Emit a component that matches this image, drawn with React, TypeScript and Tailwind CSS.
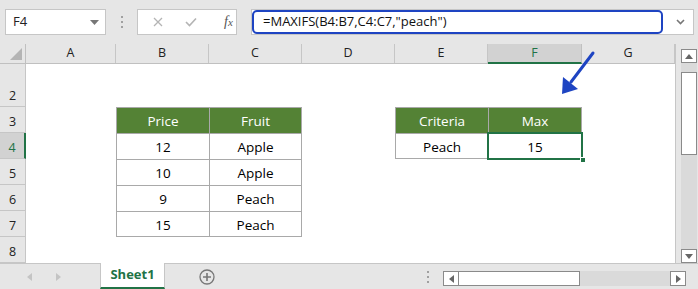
import React from "react";

const COLS = ["A", "B", "C", "D", "E", "F", "G"];
const COLW = ["w-[90px]", "w-[93px]", "w-[93px]", "w-[93px]", "w-[93px]", "w-[94px]", "w-[93px]"];

type Cell = { text?: string; kind?: "head" | "body"; l?: boolean; r?: boolean; t?: boolean; b?: boolean; sel?: boolean };

const rows: { n: number; h: string; cells: Record<number, Cell> }[] = [
  { n: 2, h: "h-[43px]", cells: {} },
  {
    n: 3,
    h: "h-[26px]",
    cells: {
      1: { text: "Price", kind: "head", l: true, t: true },
      2: { text: "Fruit", kind: "head", l: true, t: true, r: true },
      4: { text: "Criteria", kind: "head", l: true, t: true },
      5: { text: "Max", kind: "head", l: true, t: true, r: true },
    },
  },
  {
    n: 4,
    h: "h-[26px]",
    cells: {
      1: { text: "12", kind: "body", l: true, t: true },
      2: { text: "Apple", kind: "body", l: true, t: true, r: true },
      4: { text: "Peach", kind: "body", l: true, t: true, b: true },
      5: { text: "15", kind: "body", l: true, t: true, r: true, b: true, sel: true },
    },
  },
  {
    n: 5,
    h: "h-[26px]",
    cells: {
      1: { text: "10", kind: "body", l: true, t: true },
      2: { text: "Apple", kind: "body", l: true, t: true, r: true },
    },
  },
  {
    n: 6,
    h: "h-[26px]",
    cells: {
      1: { text: "9", kind: "body", l: true, t: true },
      2: { text: "Peach", kind: "body", l: true, t: true, r: true },
    },
  },
  {
    n: 7,
    h: "h-[26px]",
    cells: {
      1: { text: "15", kind: "body", l: true, t: true, b: true },
      2: { text: "Peach", kind: "body", l: true, t: true, r: true, b: true },
    },
  },
  { n: 8, h: "h-[26px]", cells: {} },
];

function CellView({ c, w }: { c?: Cell; w: string }) {
  if (!c) return <div className={`${w} h-full bg-white`} />;
  const cls = [
    w,
    "h-full relative flex items-center justify-center pt-[2px] text-[13.5px]",
    c.kind === "head" ? "bg-[#548235] text-white" : "bg-white text-black",
    c.l ? "border-l border-l-[#a9a9a9]" : "",
    c.r ? "border-r border-r-[#a9a9a9]" : "",
    c.t ? "border-t border-t-[#a9a9a9]" : "",
    c.b ? "border-b border-b-[#a9a9a9]" : "",
  ].join(" ");
  return (
    <div className={cls}>
      <span>{c.text}</span>
      {c.sel && (
        <>
          <div className="absolute -left-[2px] -top-[2px] -right-[2px] -bottom-[2px] border-2 border-[#217346] pointer-events-none" />
          <div className="absolute -right-[5px] -bottom-[5px] w-[6px] h-[6px] bg-[#217346] border border-white" />
        </>
      )}
    </div>
  );
}

export default function App() {
  return (
    <div className="relative w-[698px] h-[289px] overflow-hidden bg-[#e6e6e6] font-['Open_Sans',sans-serif] select-none">
      {/* Formula band */}
      <div className="h-[44px] flex items-start pt-[9px]">
        <div className="ml-[5px] w-[101px] h-[26px] bg-white border border-[#c6c6c6] flex items-center justify-between pl-[7px] pr-[6px]">
          <span className="text-[13px] text-[#222]">F4</span>
          <svg width="9" height="5" viewBox="0 0 9 5">
            <path d="M0 0 L9 0 L4.5 5 Z" fill="#777" />
          </svg>
        </div>
        <div className="w-[31px] h-[26px] flex flex-col items-center justify-center gap-[3px]">
          <div className="w-[2px] h-[2px] bg-[#a0a0a0]" />
          <div className="w-[2px] h-[2px] bg-[#a0a0a0]" />
          <div className="w-[2px] h-[2px] bg-[#a0a0a0]" />
        </div>
        <div className="w-[100px] h-[26px] bg-white border border-[#c6c6c6] flex items-center">
          <svg className="ml-[15px]" width="10" height="10" viewBox="0 0 10 10">
            <path d="M1 1 L9 9 M9 1 L1 9" stroke="#b4b4b4" strokeWidth="1.3" />
          </svg>
          <svg className="ml-[22px]" width="12" height="10" viewBox="0 0 12 10">
            <path d="M1 5 L4.5 8.5 L11 1.5" stroke="#b4b4b4" strokeWidth="1.6" fill="none" />
          </svg>
          <span className="ml-[27px] text-[14px] italic text-[#555] font-['Liberation_Serif',serif] leading-none">
            f<span className="text-[11px]">x</span>
          </span>
        </div>
        <div className="ml-[14px] w-[443px] h-[26px] bg-white border border-[#c6c6c6] flex items-center relative">
          <div className="absolute left-0 top-0 w-[411px] h-[24px] border-2 border-[#1e44c2] rounded-[5px]" />
          <span className="ml-[11px] text-[13px] text-[#111]">=MAXIFS(B4:B7,C4:C7,"peach")</span>
          <svg className="absolute right-[8px] top-[9px]" width="9" height="6" viewBox="0 0 9 6">
            <path d="M1 1 L4.5 4.5 L8 1" stroke="#777" strokeWidth="1.6" fill="none" />
          </svg>
        </div>
      </div>

      {/* Sheet */}
      <div className="flex h-[219px]">
        <div className="w-[676px] flex flex-col border-r border-[#c6c6c6]">
          {/* Column headers */}
          <div className="flex h-[20px] border-b border-[#c0c0c0]">
            <div className="w-[26px] h-full border-r border-[#c0c0c0] flex items-end justify-end pr-[3px] pb-[3px]">
              <svg width="12" height="12" viewBox="0 0 12 12">
                <path d="M12 0 L12 12 L0 12 Z" fill="#b4b4b4" />
              </svg>
            </div>
            {COLS.map((c, i) =>
              c === "F" ? (
                <div
                  key={c}
                  className={`${COLW[i]} h-[20px] bg-[#d2d2d2] border-r border-[#c0c0c0] border-b-2 border-b-[#217346] flex items-center justify-center text-[12.5px] text-[#217346]`}
                >
                  {c}
                </div>
              ) : (
                <div
                  key={c}
                  className={`${COLW[i]} h-full border-r border-[#c6c6c6] flex items-center justify-center text-[12.5px] text-[#222]`}
                >
                  {c}
                </div>
              )
            )}
          </div>
          {/* Rows */}
          {rows.map((r) => (
            <div key={r.n} className={`flex ${r.h}`}>
              {r.n === 4 ? (
                <div className="w-[26px] h-full bg-[#d2d2d2] border-b border-[#c6c6c6] border-r-2 border-r-[#217346] flex items-end justify-center pb-0 text-[12.5px] text-[#217346]">
                  {r.n}
                </div>
              ) : (
                <div className="w-[26px] h-full border-b border-r border-[#c6c6c6] flex items-end justify-center pb-0 text-[12.5px] text-[#222]">
                  {r.n}
                </div>
              )}
              {COLS.map((_, i) => (
                <CellView key={i} c={r.cells[i]} w={COLW[i]} />
              ))}
            </div>
          ))}
        </div>
        {/* Vertical scrollbar */}
        <div className="w-[22px] flex flex-col pl-[5px] pr-[1px]">
          <div className="h-[5px]" />
          <div className="h-[14px] bg-white border border-[#8a8a8a] flex items-center justify-center">
            <svg width="8" height="5" viewBox="0 0 8 5">
              <path d="M0 5 L8 5 L4 0 Z" fill="#666" />
            </svg>
          </div>
          <div className="flex-1 bg-[#dadada] flex flex-col pt-[9px]">
            <div className="h-[83px] bg-white border border-[#8a8a8a]" />
            <div className="flex-1" />
            <div className="h-[14px] bg-white border border-[#8a8a8a] flex items-center justify-center">
              <svg width="8" height="5" viewBox="0 0 8 5">
                <path d="M0 0 L8 0 L4 5 Z" fill="#666" />
              </svg>
            </div>
          </div>
        </div>
      </div>

      {/* Tab bar */}
      <div className="h-[26px] flex border-t border-[#c6c6c6]">
        <div className="w-[100px] flex items-center">
          <svg className="ml-[27px]" width="5" height="8" viewBox="0 0 5 8">
            <path d="M5 0 L5 8 L0 4 Z" fill="#c4c4c4" />
          </svg>
          <svg className="ml-[24px]" width="5" height="8" viewBox="0 0 5 8">
            <path d="M0 0 L0 8 L5 4 Z" fill="#c4c4c4" />
          </svg>
        </div>
        <div className="w-[65px] -mt-[1px] h-[26px] bg-white border-x border-[#c6c6c6] border-b-2 border-b-[#217346] flex items-center justify-center text-[13px] font-bold text-[#217346]">
          Sheet1
        </div>
        <div className="w-[34px]" />
        <div className="flex items-center">
          <svg width="16" height="16" viewBox="0 0 16 16">
            <circle cx="8" cy="8" r="7" stroke="#777" strokeWidth="1.3" fill="none" />
            <path d="M8 4 L8 12 M4 8 L12 8" stroke="#777" strokeWidth="1.6" />
          </svg>
        </div>
        <div className="w-[212px]" />
        <div className="flex flex-col justify-center gap-[3px]">
          <div className="w-[2px] h-[2px] bg-[#a0a0a0]" />
          <div className="w-[2px] h-[2px] bg-[#a0a0a0]" />
          <div className="w-[2px] h-[2px] bg-[#a0a0a0]" />
        </div>
        <div className="ml-[14px] mt-[7px] h-[15px] w-[243px] bg-[#dadada] flex">
          <div className="w-[16px] h-full bg-white border border-[#8a8a8a] flex items-center justify-center">
            <svg width="5" height="8" viewBox="0 0 5 8">
              <path d="M5 0 L5 8 L0 4 Z" fill="#666" />
            </svg>
          </div>
          <div className="w-[122px] h-full bg-white border border-[#8a8a8a] -ml-[1px]" />
          <div className="flex-1" />
          <div className="w-[16px] h-full bg-white border border-[#8a8a8a] flex items-center justify-center">
            <svg width="5" height="8" viewBox="0 0 5 8">
              <path d="M0 0 L0 8 L5 4 Z" fill="#666" />
            </svg>
          </div>
        </div>
      </div>

      {/* Arrow annotation */}
      <svg className="absolute left-0 top-0 pointer-events-none" width="698" height="289" viewBox="0 0 698 289">
        <path d="M593 53 L571 82" stroke="#1e44c2" strokeWidth="3" strokeLinecap="round" />
        <path d="M562 94 L563 77 L578 89 Z" fill="#1e44c2" />
      </svg>
    </div>
  );
}
